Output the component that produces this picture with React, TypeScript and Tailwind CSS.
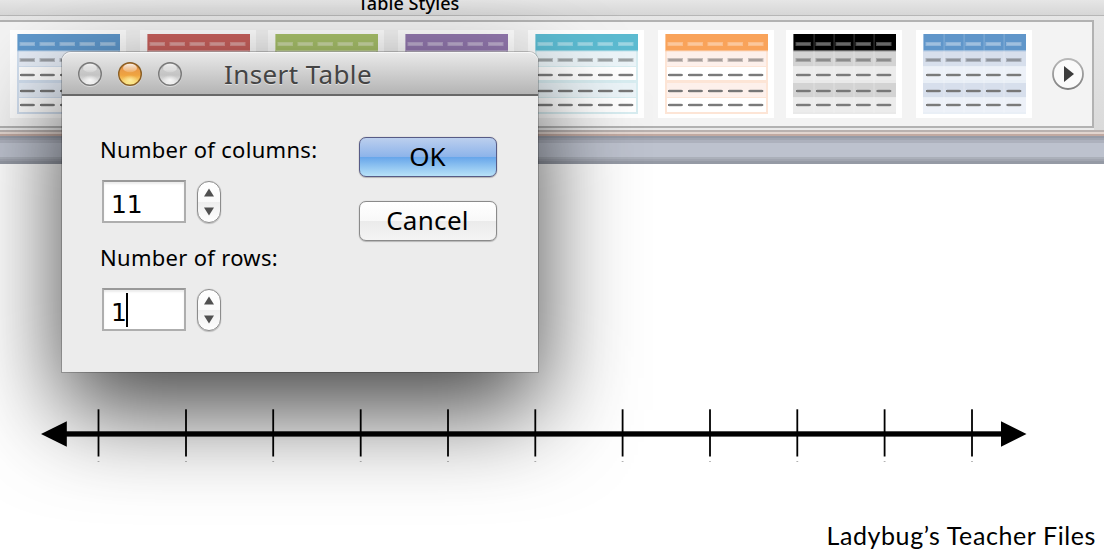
type Style = { head: string; band: string; plain: string; edge: string; gap: string; grid?: boolean };

const styles: Style[] = [
  { head: "#5f98cc", band: "#e6edf7", plain: "#ffffff", edge: "#d3e0f0", gap: "" },
  { head: "#c9615d", band: "#f8e6e5", plain: "#ffffff", edge: "#efcfce", gap: "ml-[14px]" },
  { head: "#a9c26b", band: "#eff4e3", plain: "#ffffff", edge: "#dce6c5", gap: "ml-[12px]" },
  { head: "#9479b0", band: "#ece7f2", plain: "#ffffff", edge: "#d9d0e3", gap: "ml-[14px]" },
  { head: "#5cbbd1", band: "#ebf4f8", plain: "#ffffff", edge: "#d8edf1", gap: "ml-[14px]" },
  { head: "#f9a35a", band: "#fdf0eb", plain: "#ffffff", edge: "#fde5d6", gap: "ml-[14px]" },
  { head: "#000000", band: "#d3d3d3", plain: "#ececec", edge: "#e9e9e9", gap: "ml-[12px]", grid: true },
  { head: "#6096ca", band: "#d7dfec", plain: "#edf1f8", edge: "#e9eff6", gap: "ml-[14px]", grid: true },
];

const dashX = [10, 30, 50, 70, 90.5];

function Thumb({ s }: { s: Style }) {
  return (
    <svg width="116" height="88" viewBox="0 0 116 88" className={`shrink-0 bg-white ${s.gap}`}>
      <rect x="7" y="20" width="103" height="64" fill={s.edge} />
      <rect x={s.grid ? 7 : 9} y="21" width={s.grid ? 103 : 99} height="15" fill={s.band} />
      <rect x={s.grid ? 7 : 9} y="37" width={s.grid ? 103 : 99} height="13" fill={s.plain} />
      <rect x={s.grid ? 7 : 9} y="53" width={s.grid ? 103 : 99} height="14" fill={s.band} />
      <rect x={s.grid ? 7 : 9} y="68" width={s.grid ? 103 : 99} height="14" fill={s.plain} />
      <rect x="7.4" y="4" width="102.6" height="16.5" fill={s.head} />
      <rect x="7.4" y="20.5" width="102.6" height="1" fill={s.head} opacity="0.3" />
      {s.grid &&
        [27.5, 47.5, 67.5, 87.5].map((x) => (
          <g key={x}>
            <rect x={x} y="4" width="1.2" height="16.5" fill="#fff" opacity="0.2" />
            <rect x={x} y="21" width="1" height="62" fill="#fff" opacity="0.3" />
          </g>
        ))}
      {dashX.map((x) => (
        <g key={x}>
          <rect x={x - 0.5} y="12" width="15.5" height="4" fill="#fff" opacity="0.3" />
          <rect x={x + 0.5} y="13" width="13.5" height="2" fill="#fff" opacity="0.15" />
          <rect x={x - 0.5} y="28" width="15.5" height="4" fill="#000" opacity="0.2" />
          <rect x={x + 0.5} y="29" width="13.5" height="2" fill="#000" opacity="0.17" />
          <rect x={x} y="44" width="14.7" height="2" fill="#7a7a7a" />
          <rect x={x + 1} y="43.3" width="12.7" height="3.4" fill="#7a7a7a" opacity="0.3" />
          <rect x={x} y="60" width="14.7" height="2" fill="#767676" />
          <rect x={x + 1} y="59.3" width="12.7" height="3.4" fill="#7a7a7a" opacity="0.3" />
          <rect x={x} y="74" width="14.7" height="2" fill="#7a7a7a" />
          <rect x={x + 1} y="73.3" width="12.7" height="3.4" fill="#7a7a7a" opacity="0.3" />
        </g>
      ))}
    </svg>
  );
}

const ticks = [98.5, 186, 273.2, 360.7, 448, 535.3, 622.6, 710, 797.3, 884.6, 972];

function NumberLine() {
  return (
    <svg width="1104" height="64" viewBox="0 404 1104 64" className="block">
      <rect x="64" y="431.3" width="940" height="5.3" />
      <path d="M41 434 L66.8 421.2 V446.8 Z" />
      <path d="M1026.5 434 L1001 421.2 V446.8 Z" />
      {ticks.map((x) => (
        <g key={x}>
          <rect x={x - 0.9} y="409.3" width="1.8" height="47.2" />
          <rect x={x - 0.9} y="461" width="1.8" height="1" opacity="0.3" />
        </g>
      ))}
    </svg>
  );
}

function Light({ amber }: { amber?: boolean }) {
  const id = amber ? "amber" : "gray";
  return (
    <svg width="26" height="26" viewBox="0 0 26 26">
      <defs>
        <linearGradient id={id} x1="0" y1="0" x2="0" y2="1">
          <stop offset="0" stopColor={amber ? "#c8711f" : "#929292"} />
          <stop offset="0.3" stopColor={amber ? "#e99a48" : "#cbcbcb"} />
          <stop offset="0.55" stopColor={amber ? "#efa440" : "#c4c4c4"} />
          <stop offset="1" stopColor={amber ? "#fdf08a" : "#f4f4f4"} />
        </linearGradient>
        <linearGradient id={`${id}Gloss`} x1="0" y1="0" x2="0" y2="1">
          <stop offset="0" stopColor="#fff" stopOpacity="0.9" />
          <stop offset="1" stopColor="#fff" stopOpacity="0.15" />
        </linearGradient>
        <radialGradient id={`${id}Glow`}>
          <stop offset="0" stopColor={amber ? "#fff6b0" : "#ffffff"} stopOpacity="0.8" />
          <stop offset="1" stopColor={amber ? "#fff6b0" : "#ffffff"} stopOpacity="0" />
        </radialGradient>
      </defs>
      <circle cx="13" cy="14" r="12" fill="#fff" opacity="0.45" />
      <circle cx="13" cy="13" r="11.3" fill={`url(#${id})`} stroke={amber ? "#8a5f26" : "#7a7a7a"} strokeWidth="1.4" />
      <ellipse cx="13" cy="7" rx="7" ry="4.3" fill={`url(#${id}Gloss)`} />
      <ellipse cx="13" cy="19" rx="8" ry="5" fill={`url(#${id}Glow)`} />
    </svg>
  );
}

function Stepper() {
  return (
    <div className="flex h-[42px] w-[24px] flex-col items-center justify-between rounded-full border-[1.5px] border-[#8c8c8c] bg-[linear-gradient(#ffffff_0%,#fafafa_49%,#eeeeee_50%,#ffffff_100%)] py-[6px] shadow-[0_0_1px_rgba(0,0,0,0.3),0_1px_1px_rgba(0,0,0,0.18)]">
      <svg width="10" height="9" viewBox="0 0 10 9"><path d="M5 0.5 L10 8.5 H0 Z" fill="#505050" /></svg>
      <svg width="10" height="9" viewBox="0 0 10 9"><path d="M5 8.5 L10 0.5 H0 Z" fill="#505050" /></svg>
    </div>
  );
}

function NumberField({ label, value, caret }: { label: string; value: string; caret?: boolean }) {
  return (
    <div className="flex h-[108px] flex-col">
      <div className="h-[45px] whitespace-nowrap text-[22px] leading-[28px] tracking-[0.3px]">{label}</div>
      <div className="flex items-center gap-[11px] pl-[2px]">
        <div className="flex h-[43px] w-[84px] items-center border-2 border-[#aeaeae] border-t-[#999999] bg-white pl-[7px] pt-[7px] shadow-[inset_0_2px_2px_rgba(0,0,0,0.08)]">
          <span className="font-['DejaVu_Sans',sans-serif] text-[25px] leading-[30px] tracking-[-0.1px]">{value}</span>
          {caret && <span className="-ml-px -mt-[6px] h-[34px] w-[2px] bg-black" />}
        </div>
        <Stepper />
      </div>
    </div>
  );
}

function Dialog() {
  return (
    <div className="absolute left-[62px] top-[52px] flex h-[320px] w-[476px] flex-col rounded-t-[9px] bg-[#ececec] shadow-[0_0_0_1px_rgba(0,0,0,0.2),0_38px_96px_rgba(0,0,0,0.74)]">
      <div className="flex h-[44px] shrink-0 items-center rounded-t-[9px] border-b-2 border-[#686868] bg-[linear-gradient(#eaeaea,#d2d2d2_45%,#b4b4b4)] pl-[15px] pt-[2px] shadow-[inset_0_1px_0_rgba(255,255,255,0.6)]">
        <div className="flex gap-[14px]">
          <Light />
          <Light amber />
          <Light />
        </div>
        <div className="ml-[41px] whitespace-nowrap text-[26px] leading-[36px] tracking-[0.4px] text-[#444444] [text-shadow:0_1px_0_rgba(255,255,255,0.5)]">
          Insert Table
        </div>
      </div>
      <div className="flex flex-1 justify-between pl-[38px] pr-[41px] pt-[39px]">
        <div className="flex flex-col">
          <NumberField label="Number of columns:" value="11" />
          <NumberField label="Number of rows:" value="1" caret />
        </div>
        <div className="flex flex-col gap-[24px] pt-[2px]">
          <button className="h-[40px] w-[138px] rounded-[7px] border-[1.5px] border-[#575b86] bg-[linear-gradient(#bccfee_0%,#8db4ea_49%,#66a5ea_50%,#b8e2f8_100%)] text-[26px] leading-[34px] shadow-[0_0_1px_rgba(0,0,0,0.4),0_1px_1px_rgba(0,0,0,0.2)]">
            <span className="-mt-[3px] block pr-px">OK</span>
          </button>
          <button className="h-[40px] w-[138px] rounded-[7px] border-[1.5px] border-[#8a8a8a] bg-[linear-gradient(#ffffff_0%,#f8f8f8_49%,#ebebeb_50%,#f4f4f4_100%)] text-[26px] leading-[34px] tracking-[0.3px] shadow-[0_0_1px_rgba(0,0,0,0.3),0_1px_1px_rgba(0,0,0,0.2)]">
            <span className="-mt-[3px] block pr-px">Cancel</span>
          </button>
        </div>
      </div>
    </div>
  );
}

export default function App() {
  return (
    <div className="relative flex h-[560px] w-[1104px] flex-col overflow-hidden bg-white font-['Noto_Sans','Open_Sans',sans-serif] text-black">
      <div className="flex h-[16px] shrink-0 items-end border-b border-[#b6b6b6] bg-[linear-gradient(#e6e6e6,#d6d6d6)] pl-[358px]">
        <span className="whitespace-nowrap text-[18px] font-medium leading-[24px] tracking-[0.1px]">Table Styles</span>
      </div>
      <div className="flex h-[114px] shrink-0 flex-col bg-[linear-gradient(#e6e6e6,#dadada)] pt-[4px]">
        <div className="flex h-[108px] w-[1094px] items-center border-y-2 border-r-2 border-[#b2b2b2] bg-[#f3f3f3] pl-[10px]">
          {styles.map((s, i) => (
            <Thumb key={i} s={s} />
          ))}
          <svg width="34" height="34" viewBox="0 0 34 34" className="ml-[19px] shrink-0">
            <defs>
              <linearGradient id="ring" x1="0" y1="0" x2="0" y2="1">
                <stop offset="0" stopColor="#b8b8b8" />
                <stop offset="1" stopColor="#808080" />
              </linearGradient>
            </defs>
            <circle cx="17" cy="17" r="15" fill="#fafafa" stroke="url(#ring)" strokeWidth="1.8" />
            <path d="M13 9 L23 17 L13 25 Z" fill="#3c3c3c" />
          </svg>
        </div>
        <div className="h-[2px] w-[1094px] bg-[#ebebeb]" />
      </div>
      <div className="h-[6px] shrink-0 bg-[linear-gradient(#b9b1af_0_2px,#e2d5cf_2px_4px,#c1a9a1_4px_6px)]" />
      <div className="h-[28px] shrink-0 bg-[linear-gradient(#969ba7_0_2px,#a0a5b1_2px_4px,#adb1bd_4px_7px,#bdc2ce_7px_21px,#abb0ba_21px_23px,#a1a5b0_23px_25px,#959aa5_25px_28px)]" />
      <div className="flex flex-1 flex-col pt-[240px]">
        <NumberLine />
        <div className="mt-[49px] self-end whitespace-nowrap pr-[8px] font-['Lato',sans-serif] text-[25px] leading-[36px] tracking-[0.6px]">
          Ladybug’s Teacher Files
        </div>
      </div>
      <Dialog />
    </div>
  );
}
